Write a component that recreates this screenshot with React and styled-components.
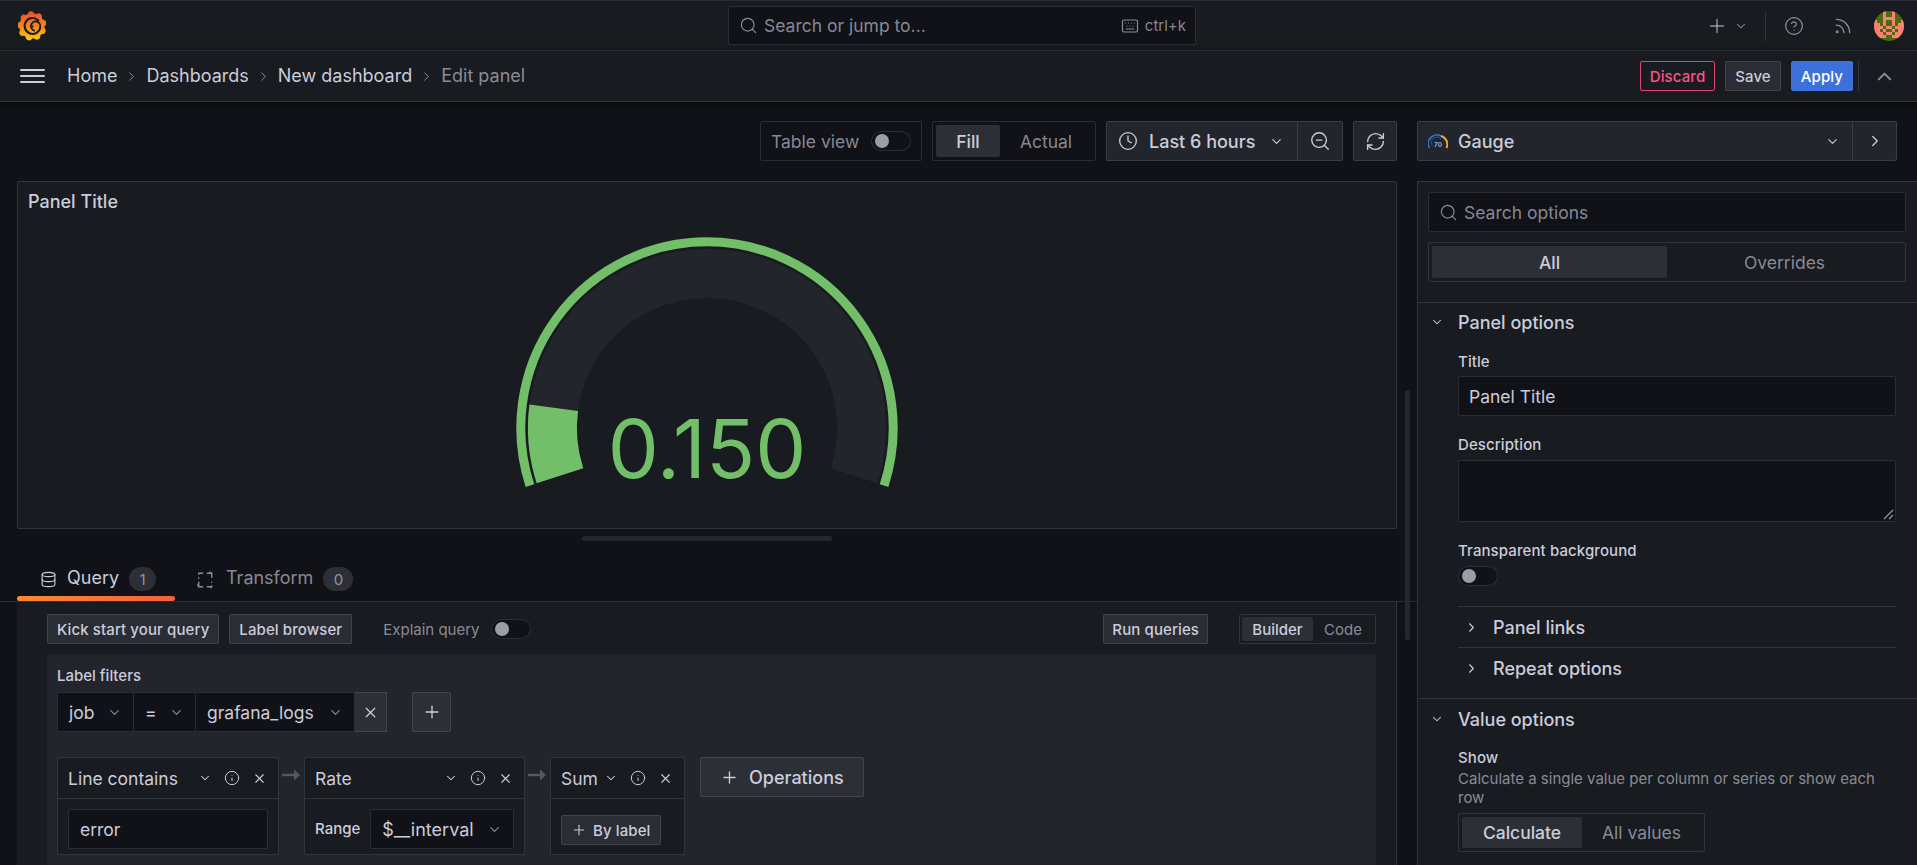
import React from "react";
import styled, { createGlobalStyle } from "styled-components";
import {
  Search, Plus, ChevronDown, ChevronRight, ChevronUp, CircleHelp, Rss, Clock, ZoomOut,
  RefreshCw, Database, Info, X, Keyboard,
} from "lucide-react";

const Global = createGlobalStyle`
  html, body { margin: 0; padding: 0; background: #111217; height: 100%; overflow: hidden; }
  body { font-family: Inter, "Noto Sans", sans-serif; font-size: 17.5px; color: #ccccdc; }
  * { box-sizing: border-box; }
`;

const border = "rgba(204,204,220,0.15)";
const muted = "rgba(204,204,220,0.65)";

const Page = styled.div`
  position: relative;
  width: 1917px;
  height: 865px;
  overflow: hidden;
  background: #111217;
`;

const TopBar = styled.header`
  display: grid;
  grid-template-columns: 728px 468px 1fr;
  align-items: center;
  height: 51px;
  background: #181b1f;
  border-top: 1px solid #2a2d38;
  border-bottom: 1px solid ${border};
`;
const LogoSlot = styled.div`
  padding-left: 18px;
  display: flex;
  align-items: center;
`;
const GlobalSearch = styled.div`
  display: flex;
  align-items: center;
  height: 39px;
  padding: 0 9px 0 10px;
  background: #111217;
  border: 1px solid ${border};
  border-radius: 2px;
  color: ${muted};
  svg { flex: none; }
`;
const SearchHint = styled.span`
  margin-left: 6px;
  flex: 1;
  font-size: 17.5px;
`;
const ShortcutText = styled.span`
  margin-left: 6px;
  font-size: 15px;
`;
const TopActions = styled.div`
  display: flex;
  align-items: center;
  justify-content: flex-end;
  padding-right: 13px;
  color: ${muted};
`;
const ActionDivider = styled.span`
  width: 1px;
  height: 30px;
  margin: 0 18px 0 17px;
  background: ${border};
`;
const ActionIcon = styled.span`
  display: inline-flex;
  margin-left: ${(p) => p.$ml || 0}px;
`;

const Breadcrumbar = styled.div`
  position: relative;
  z-index: 2;
  display: flex;
  align-items: center;
  height: 51px;
  padding: 0 13px 0 20px;
  background: #181b1f;
  border-bottom: 1px solid ${border};
  box-shadow: 0 2px 8px rgba(0, 0, 0, 0.65);
`;
const MenuLines = styled.span`
  display: flex;
  flex-direction: column;
  justify-content: space-between;
  width: 25px;
  height: 15px;
  margin-right: 22px;
  i { display: block; height: 2.4px; background: #ccccdc; border-radius: 1px; }
`;
const Crumb = styled.span`
  margin-top: -1px;
  font-size: 18px;
  color: ${(p) => (p.$current ? muted : "#ccccdc")};
`;
const CrumbSep = styled.span`
  display: inline-flex;
  justify-content: center;
  width: 29px;
  color: ${muted};
`;
const Spacer = styled.span`
  flex: 1;
`;
const EndGap = styled.span`
  flex: none;
  width: 8px;
`;
const SmallButton = styled.button`
  display: inline-flex;
  align-items: center;
  height: 30px;
  padding: 0 ${(p) => p.$px || 9}px;
  margin-left: ${(p) => p.$ml || 0}px;
  font: 500 15px Inter, sans-serif;
  letter-spacing: 0.1px;
  color: #ccccdc;
  background: #2a2d33;
  border: 1px solid ${border};
  border-radius: 2px;
  white-space: nowrap;
`;
const DangerButton = styled(SmallButton)`
  color: #ff5286;
  background: transparent;
  border-color: #e0446f;
`;
const PrimaryButton = styled(SmallButton)`
  color: #fff;
  background: #3d71d9;
  border-color: #3d71d9;
`;
const VDivider = styled.span`
  width: 1px;
  height: 30px;
  margin: 0 14px 0 5px;
  background: ${border};
`;

const Workspace = styled.div`
  display: flex;
  height: 763px;
`;
const LeftColumn = styled.div`
  width: 1417px;
  padding: 19px 20px 0 17px;
  flex: none;
`;
const RightColumn = styled.div`
  flex: 1;
  padding-top: 19px;
  min-width: 0;
`;
const Toolbar = styled.div`
  display: flex;
  justify-content: flex-end;
  height: 40px;
  gap: 10px;
`;
const BoxedToggle = styled.div`
  display: flex;
  align-items: center;
  width: 162px;
  padding: 0 11px 0 10px;
  gap: 12px;
  color: ${muted};
  white-space: nowrap;
  border: 1px solid ${border};
  border-radius: 2px;
`;
const Toggle = styled.span`
  display: flex;
  align-items: center;
  width: 40px;
  height: 20px;
  padding: 0 3px;
  background: #111217;
  border: 1px solid ${border};
  border-radius: 10px;
  flex: none;
  &::before {
    content: "";
    width: 14px;
    height: 14px;
    border-radius: 50%;
    background: #9d9da8;
  }
`;
const Segmented = styled.div`
  display: ${(p) => (p.$block ? "flex" : "inline-flex")};
  align-items: stretch;
  height: ${(p) => p.$h || 40}px;
  margin-left: ${(p) => p.$ml || 0}px;
  padding: ${(p) => p.$pad || 3}px;
  width: ${(p) => (p.$w ? `${p.$w}px` : "auto")};
  border: 1px solid ${border};
  border-radius: 2px;
`;
const Segment = styled.span`
  display: flex;
  align-items: center;
  justify-content: center;
  width: ${(p) => (p.$w ? `${p.$w}px` : "auto")};
  flex: ${(p) => (p.$grow ? 1 : "none")};
  font-size: ${(p) => p.$size || 17.5}px;
  font-weight: ${(p) => (p.$active ? 500 : 400)};
  color: ${(p) => (p.$active ? "#ccccdc" : muted)};
  background: ${(p) => (p.$active ? "#2c2f36" : "transparent")};
  border-radius: 2px;
`;
const TimeGroup = styled.div`
  display: flex;
  height: 40px;
  background: #22252b;
  border: 1px solid ${border};
  border-radius: 2px;
`;
const TimeRange = styled.div`
  display: flex;
  align-items: center;
  width: 191px;
  padding: 0 0 0 11px;
  font-size: 18px;
  font-weight: 500;
  white-space: nowrap;
  border-right: 1px solid ${border};
  span { margin: 0 14px 0 11px; }
`;
const IconCell = styled.div`
  display: flex;
  align-items: center;
  justify-content: center;
  width: ${(p) => p.$w || 44}px;
`;
const IconBox = styled.div`
  display: flex;
  align-items: center;
  justify-content: center;
  width: 44px;
  height: 40px;
  background: #22252b;
  border: 1px solid ${border};
  border-radius: 2px;
`;
const Panel = styled.section`
  height: 348px;
  margin-top: 20px;
  background: #181b1f;
  border: 1px solid ${border};
  border-radius: 2px;
`;
const PanelTitle = styled.div`
  height: 39px;
  line-height: 39px;
  padding-left: 10px;
  font-size: 18px;
  font-weight: 500;
`;
const GaugeSvg = styled.svg`
  display: block;
  margin: 5px auto 0;
`;
const Splitter = styled.div`
  display: flex;
  justify-content: center;
  height: 38px;
  padding-top: 7px;
  &::before {
    content: "";
    width: 250px;
    height: 5px;
    border-radius: 3px;
    background: #25272d;
  }
`;
const Tabs = styled.div`
  display: flex;
  height: 35px;
  margin: 0 -20px 0 -17px;
  padding-left: 17px;
  border-bottom: 1px solid ${border};
`;
const Tab = styled.div`
  position: relative;
  display: flex;
  align-items: flex-start;
  height: 34px;
  width: ${(p) => p.$w}px;
  padding-left: ${(p) => p.$pl}px;
  color: ${(p) => (p.$active ? "#ccccdc" : muted)};
  font-size: 18px;
  svg { margin-top: 4px; flex: none; }
  &::after {
    content: "";
    display: ${(p) => (p.$active ? "block" : "none")};
    position: absolute;
    left: 0;
    right: 0;
    bottom: 0;
    height: 5px;
    border-radius: 3px;
    background: linear-gradient(90deg, #ff8833, #f55f3e);
  }
`;
const TabLabel = styled.span`
  margin: 0 10px 0 ${(p) => p.$ml || 10}px;
`;
const Badge = styled.span`
  display: inline-flex;
  align-items: center;
  justify-content: center;
  width: ${(p) => p.$w || 27}px;
  height: 24px;
  font-size: 15px;
  color: ${muted};
  background: #2c2f36;
  border-radius: 12px;
`;
const QueryEditor = styled.div`
  height: 264px;
  padding: 12px 20px 0 30px;
  background: #181b1f;
  border-right: 1px solid ${border};
`;
const QueryHeader = styled.div`
  display: flex;
  align-items: center;
  height: 30px;
`;
const ExplainLabel = styled.span`
  margin: 0 11px 0 31px;
  font-size: 15px;
  color: ${muted};
`;
const QueryBody = styled.div`
  height: 215px;
  margin-top: 10px;
  padding: 12px 10px;
  background: #22252b;
  border-radius: 2px;
`;
const FieldLabel = styled.div`
  font-size: 15px;
  font-weight: 500;
  line-height: 20px;
  height: 26px;
`;
const FilterRow = styled.div`
  display: flex;
  height: 40px;
`;
const FilterSelect = styled.div`
  display: flex;
  align-items: center;
  justify-content: space-between;
  width: ${(p) => p.$w}px;
  padding: 0 11px;
  background: #111217;
  border: 1px solid ${border};
  border-left-width: ${(p) => (p.$first ? 1 : 0)}px;
  svg { color: ${muted}; }
`;
const FilterRemove = styled.div`
  display: flex;
  align-items: center;
  justify-content: center;
  width: 32px;
  background: #2c2f36;
  border: 1px solid ${border};
  border-left: 0;
`;
const AddFilter = styled.div`
  display: flex;
  align-items: center;
  justify-content: center;
  width: 39px;
  margin-left: 25px;
  background: #2c2f36;
  border: 1px solid ${border};
  border-radius: 2px;
`;
const OperationsRow = styled.div`
  display: flex;
  align-items: flex-start;
  margin-top: 25px;
`;
const OpCard = styled.div`
  width: ${(p) => p.$w}px;
  height: 98px;
  background: #181b1f;
  border: 1px solid ${border};
  border-radius: 2px;
`;
const OpHeader = styled.div`
  display: grid;
  grid-template-columns: 1fr 24px 30px 24px;
  align-items: center;
  justify-items: center;
  height: 41px;
  padding: 0 7px 0 10px;
  border-bottom: 1px solid ${border};
  svg { color: #ccccdc; }
`;
const OpName = styled.span`
  justify-self: start;
  font-size: 17.5px;
`;
const OpBody = styled.div`
  display: flex;
  align-items: flex-start;
  height: 55px;
  padding: 10px 10px 0;
`;
const OpInput = styled.div`
  display: flex;
  align-items: center;
  flex: 1;
  height: 40px;
  padding: 0 11px;
  background: #111217;
  border: 1px solid ${border};
  border-radius: 2px;
`;
const OpSelect = styled(OpInput)`
  justify-content: space-between;
  margin-left: 10px;
  font-size: 18px;
  svg { color: ${muted}; }
`;
const OpLabel = styled.span`
  line-height: 40px;
  font-size: 15px;
  font-weight: 500;
`;
const OpArrow = styled.svg`
  flex: none;
  width: 25px;
  margin-top: 11px;
`;
const ByLabel = styled(SmallButton)`
  margin-top: 6px;
  padding: 0 10px 0 9px;
  gap: 6px;
`;
const OperationsButton = styled.div`
  display: flex;
  align-items: center;
  gap: 10px;
  width: 164px;
  height: 40px;
  margin-left: 15px;
  padding-left: 19px;
  font-size: 18px;
  font-weight: 500;
  background: #2c2f36;
  border: 1px solid ${border};
  border-radius: 2px;
`;

const VizPicker = styled.div`
  display: flex;
  height: 40px;
  width: 480px;
  background: #22252b;
  border: 1px solid ${border};
  border-radius: 2px;
`;
const VizName = styled.div`
  display: flex;
  align-items: center;
  flex: 1;
  gap: 10px;
  padding: 0 12px 0 10px;
  font-size: 18px;
  font-weight: 500;
  border-right: 1px solid ${border};
  span { flex: 1; }
`;
const OptionsPane = styled.aside`
  height: 720px;
  margin-top: 20px;
  background: #181b1f;
  border: 1px solid ${border};
  border-right: 0;
  border-bottom: 0;
`;
const OptionsTop = styled.div`
  padding: 10px 11px 0 10px;
  height: 121px;
  border-bottom: 1px solid ${border};
`;
const OptionsSearch = styled.div`
  display: flex;
  align-items: center;
  gap: 6px;
  height: 40px;
  padding: 0 10px;
  color: ${muted};
  background: #111217;
  border: 1px solid ${border};
  border-radius: 2px;
`;
const OverridesTabs = styled(Segmented)`
  margin-top: 10px;
`;
const SectionHeader = styled.div`
  display: flex;
  align-items: center;
  height: ${(p) => p.$h || 40}px;
  font-size: 18px;
  font-weight: 500;
  svg { margin: 0 14px 0 12px; color: #ccccdc; flex: none; }
`;
const SectionBody = styled.div`
  padding: 0 21px 0 40px;
`;
const PropLabel = styled.div`
  font-size: 15px;
  font-weight: 500;
  letter-spacing: 0.1px;
  line-height: 20px;
  margin-bottom: ${(p) => p.$mb ?? 5}px;
`;
const TextField = styled.div`
  display: flex;
  align-items: center;
  height: 40px;
  padding: 0 10px;
  background: #111217;
  border: 1px solid ${border};
  border-radius: 2px;
`;
const TextAreaField = styled.div`
  position: relative;
  height: 62px;
  background: #111217;
  border: 1px solid ${border};
  border-radius: 2px;
`;
const ResizeGrip = styled.svg`
  position: absolute;
  right: 1px;
  bottom: 1px;
`;
const PropGap = styled.div`
  height: ${(p) => p.$h}px;
`;
const SubSection = styled.div`
  display: flex;
  align-items: center;
  height: 41px;
  border-top: 1px solid ${border};
  font-size: 18px;
  font-weight: 500;
  svg { margin: 0 14px 0 6px; color: #ccccdc; flex: none; }
`;
const SectionRule = styled.div`
  height: 1px;
  margin-top: 10px;
  background: ${border};
`;
const HelpText = styled.div`
  font-size: 15px;
  line-height: 19px;
  margin: -4px 0 6px;
  color: ${muted};
`;
const PaneScroll = styled.div`
  position: absolute;
  left: 1405px;
  top: 390px;
  width: 5px;
  height: 250px;
  border-radius: 3px;
  background: #25272d;
`;

const pt = (r, deg) => {
  const a = (deg * Math.PI) / 180;
  return [200 + r * Math.cos(a), 202 - r * Math.sin(a)];
};
const arc = (r, from, to) => {
  const [x1, y1] = pt(r, from);
  const [x2, y2] = pt(r, to);
  return `M${x1} ${y1}A${r} ${r} 0 ${from - to > 180 ? 1 : 0} 1 ${x2} ${y2}`;
};

const Gauge = () => (
  <GaugeSvg width="400" height="290" viewBox="0 0 400 290">
    <path d={arc(186.2, 198, -18)} fill="none" stroke="#73bf69" strokeWidth="9" />
    <path d={arc(154.6, 198, -18)} fill="none" stroke="#22252b" strokeWidth="49" />
    <path d={arc(154.6, 198, 172.5)} fill="none" stroke="#73bf69" strokeWidth="49" />
    <text x="200" y="252" textAnchor="middle" fontFamily="Inter, sans-serif" fontSize="81" fontWeight="400" fill="#73bf69">0.150</text>
  </GaugeSvg>
);

const gearPath = (() => {
  const n = 9;
  const cx = 14, cy = 15.5;
  let d = "";
  for (let i = 0; i < n; i++) {
    const base = -95 + (i * 360) / n;
    const pts = [[12, -20], [14.6, -5], [14.6, 5], [12, 20]];
    pts.forEach(([r, o], j) => {
      const a = ((base + o) * Math.PI) / 180;
      d += `${i === 0 && j === 0 ? "M" : "L"}${(cx + r * Math.cos(a)).toFixed(2)} ${(cy + r * Math.sin(a)).toFixed(2)}`;
    });
  }
  return d + "Z";
})();

const Logo = () => (
  <svg width="28" height="30" viewBox="0 0 28 31">
    <defs>
      <linearGradient id="lg" x1="0" y1="0" x2="0" y2="1">
        <stop offset="0" stopColor="#ef4e2a" />
        <stop offset="0.55" stopColor="#f68a1e" />
        <stop offset="1" stopColor="#fbca0a" />
      </linearGradient>
    </defs>
    <path d={gearPath} fill="url(#lg)" stroke="url(#lg)" strokeWidth="1.2" strokeLinejoin="round" />
    <path d="M20.5 9.8A8.2 8.2 0 1 0 22.6 17.2" fill="none" stroke="#181b1f" strokeWidth="2.1" strokeLinecap="round" />
    <path d="M22.4 16.8A4.8 4.8 0 1 0 16.4 20.2" fill="none" stroke="#181b1f" strokeWidth="1.8" strokeLinecap="round" />
    <circle cx="14.2" cy="16" r="1.3" fill="#181b1f" />
  </svg>
);

const avatarRows = [
  ".s.s..s.s.",
  "...s..s...",
  "...ssss...",
  "s..s..s..s",
  "ss.s..s.ss",
  "sss.ss.sss",
  "ss.s..s.ss",
  "sss.ss.sss",
  ".sss..sss.",
  "..........",
];
const Avatar = () => (
  <svg width="30" height="30" viewBox="0 0 30 30">
    <defs>
      <clipPath id="avatar-clip"><circle cx="15" cy="15" r="15" /></clipPath>
    </defs>
    <g clipPath="url(#avatar-clip)">
      <rect width="30" height="30" fill="#4a6b10" />
      {avatarRows.flatMap((row, y) =>
        row.split("").map((c, x) =>
          c === "s" ? <rect key={`${x}-${y}`} x={x * 3} y={y * 3} width="3" height="3" fill="#fa8072" /> : null
        )
      )}
    </g>
  </svg>
);

const MiniGaugeSvg = styled.svg`
  flex: none;
`;
const GaugeMini = () => (
  <MiniGaugeSvg width="20" height="15" viewBox="0 0 20 15">
    <path d="M1.5 14A8.6 8.6 0 0 1 13 2" fill="none" stroke="#3871dc" strokeWidth="1.6" />
    <path d="M13 2A8.6 8.6 0 0 1 18.5 14" fill="none" stroke="#f2a62b" strokeWidth="2" />
    <path d="M4.5 12A5.5 5.5 0 0 1 13 5" fill="none" stroke="#3871dc" strokeWidth="1" opacity=".6" />
    <text x="10" y="13" textAnchor="middle" fontFamily="Inter, sans-serif" fontSize="6.5" fontWeight="700" fill="#8ea8d8">70</text>
  </MiniGaugeSvg>
);

const TransformIcon = () => (
  <svg width="18" height="18" viewBox="0 0 20 20" fill="none" stroke="currentColor" strokeWidth="1.6">
    <path d="M8 2.5H3v1.5M3 7v1.5" />
    <path d="M12 2.5h5.5v5M15 1l2.5 1.5" />
    <path d="M3 12v5.5h5M1.5 15L3 17.5" />
    <path d="M17.5 12v1M17.5 16v1.5H12M16 19l1.5-1.5" />
  </svg>
);

const Arrow = () => (
  <OpArrow height="14" viewBox="0 0 25 14">
    <path d="M3 7h14" stroke="#55585f" strokeWidth="2.4" />
    <path d="M15 1.5L21 7l-6 5.5z" fill="#55585f" />
  </OpArrow>
);

const Chev = ({ size = 15 }) => <ChevronDown size={size} strokeWidth={1.8} />;

export default function App() {
  return (
    <Page>
      <Global />
      <TopBar>
        <LogoSlot><Logo /></LogoSlot>
        <GlobalSearch>
          <Search size={19} strokeWidth={1.5} />
          <SearchHint>Search or jump to...</SearchHint>
          <Keyboard size={18} strokeWidth={1.6} />
          <ShortcutText>ctrl+k</ShortcutText>
        </GlobalSearch>
        <TopActions>
          <Plus size={22} strokeWidth={1.6} />
          <ActionIcon $ml={6}><Chev size={14} /></ActionIcon>
          <ActionDivider />
          <CircleHelp size={20} strokeWidth={1.5} />
          <ActionIcon $ml={29}><Rss size={20} strokeWidth={1.6} /></ActionIcon>
          <ActionIcon $ml={21}><Avatar /></ActionIcon>
        </TopActions>
      </TopBar>

      <Breadcrumbar>
        <MenuLines><i /><i /><i /></MenuLines>
        <Crumb>Home</Crumb>
        <CrumbSep><ChevronRight size={15} strokeWidth={1.5} /></CrumbSep>
        <Crumb>Dashboards</Crumb>
        <CrumbSep><ChevronRight size={15} strokeWidth={1.5} /></CrumbSep>
        <Crumb>New dashboard</Crumb>
        <CrumbSep><ChevronRight size={15} strokeWidth={1.5} /></CrumbSep>
        <Crumb $current>Edit panel</Crumb>
        <Spacer />
        <DangerButton>Discard</DangerButton>
        <SmallButton $ml={10}>Save</SmallButton>
        <PrimaryButton $ml={10}>Apply</PrimaryButton>
        <VDivider />
        <ChevronUp size={23} strokeWidth={2} color={muted} />
        <EndGap />
      </Breadcrumbar>

      <Workspace>
        <LeftColumn>
          <Toolbar>
            <BoxedToggle>Table view<Toggle /></BoxedToggle>
            <Segmented>
              <Segment $active $w={64}>Fill</Segment>
              <Segment $w={92}>Actual</Segment>
            </Segmented>
            <TimeGroup>
              <TimeRange>
                <Clock size={20} strokeWidth={1.6} />
                <span>Last 6 hours</span>
                <Chev />
              </TimeRange>
              <IconCell><ZoomOut size={22} strokeWidth={1.5} /></IconCell>
            </TimeGroup>
            <IconBox><RefreshCw size={21} strokeWidth={1.6} /></IconBox>
          </Toolbar>

          <Panel>
            <PanelTitle>Panel Title</PanelTitle>
            <Gauge />
          </Panel>
          <Splitter />

          <Tabs>
            <Tab $active $w={158} $pl={23}>
              <Database size={17} strokeWidth={1.6} />
              <TabLabel>Query</TabLabel>
              <Badge>1</Badge>
            </Tab>
            <Tab $w={200} $pl={21}>
              <TransformIcon />
              <TabLabel $ml={12}>Transform</TabLabel>
              <Badge $w={30}>0</Badge>
            </Tab>
          </Tabs>

          <QueryEditor>
            <QueryHeader>
              <SmallButton>Kick start your query</SmallButton>
              <SmallButton $ml={10}>Label browser</SmallButton>
              <ExplainLabel>Explain query</ExplainLabel>
              <Toggle />
              <Spacer />
              <SmallButton $px={8}>Run queries</SmallButton>
              <Segmented $h={30} $pad={2} $ml={31}>
                <Segment $active $size={15} $w={71}>Builder</Segment>
                <Segment $size={15} $w={60}>Code</Segment>
              </Segmented>
            </QueryHeader>

            <QueryBody>
              <FieldLabel>Label filters</FieldLabel>
              <FilterRow>
                <FilterSelect $first $w={77}>job<Chev /></FilterSelect>
                <FilterSelect $w={62}>=<Chev /></FilterSelect>
                <FilterSelect $w={159}>grafana_logs<Chev /></FilterSelect>
                <FilterRemove><X size={17} strokeWidth={1.7} /></FilterRemove>
                <AddFilter><Plus size={20} strokeWidth={1.6} /></AddFilter>
              </FilterRow>

              <OperationsRow>
                <OpCard $w={222}>
                  <OpHeader>
                    <OpName>Line contains</OpName>
                    <Chev size={14} />
                    <Info size={16} strokeWidth={1.5} />
                    <X size={15} strokeWidth={1.7} />
                  </OpHeader>
                  <OpBody><OpInput>error</OpInput></OpBody>
                </OpCard>
                <Arrow />
                <OpCard $w={221}>
                  <OpHeader>
                    <OpName>Rate</OpName>
                    <Chev size={14} />
                    <Info size={16} strokeWidth={1.5} />
                    <X size={15} strokeWidth={1.7} />
                  </OpHeader>
                  <OpBody>
                    <OpLabel>Range</OpLabel>
                    <OpSelect>$__interval<Chev /></OpSelect>
                  </OpBody>
                </OpCard>
                <Arrow />
                <OpCard $w={135}>
                  <OpHeader>
                    <OpName>Sum</OpName>
                    <Chev size={14} />
                    <Info size={16} strokeWidth={1.5} />
                    <X size={15} strokeWidth={1.7} />
                  </OpHeader>
                  <OpBody>
                    <ByLabel><Plus size={16} strokeWidth={1.6} />By label</ByLabel>
                  </OpBody>
                </OpCard>
                <OperationsButton><Plus size={19} strokeWidth={1.7} />Operations</OperationsButton>
              </OperationsRow>
            </QueryBody>
          </QueryEditor>
        </LeftColumn>

        <RightColumn>
          <VizPicker>
            <VizName>
              <GaugeMini />
              <span>Gauge</span>
              <Chev />
            </VizName>
            <IconCell $w={43}><ChevronRight size={18} strokeWidth={1.7} /></IconCell>
          </VizPicker>

          <OptionsPane>
            <OptionsTop>
              <OptionsSearch>
                <Search size={19} strokeWidth={1.5} />
                Search options
              </OptionsSearch>
              <OverridesTabs $block>
                <Segment $active $w={235}>All</Segment>
                <Segment $grow>Overrides</Segment>
              </OverridesTabs>
            </OptionsTop>

            <SectionHeader $h={38}><Chev size={14} />Panel options</SectionHeader>
            <SectionBody>
              <PropGap $h={11} />
              <PropLabel $mb={4}>Title</PropLabel>
              <TextField>Panel Title</TextField>
              <PropGap $h={19} />
              <PropLabel>Description</PropLabel>
              <TextAreaField>
                <ResizeGrip width="11" height="11" viewBox="0 0 11 11">
                  <path d="M1 10L10 1M6 10l4-4" stroke="#9d9da8" strokeWidth="1.1" />
                </ResizeGrip>
              </TextAreaField>
              <PropGap $h={19} />
              <PropLabel>Transparent background</PropLabel>
              <Toggle />
              <PropGap $h={20} />
              <SubSection><ChevronRight size={15} strokeWidth={1.8} />Panel links</SubSection>
              <SubSection><ChevronRight size={15} strokeWidth={1.8} />Repeat options</SubSection>
            </SectionBody>
            <SectionRule />
            <SectionHeader><Chev size={14} />Value options</SectionHeader>
            <SectionBody>
              <PropGap $h={9} />
              <PropLabel>Show</PropLabel>
              <HelpText>Calculate a single value per column or series or show each row</HelpText>
              <Segmented $h={39} $w={247}>
                <Segment $active $w={120}>Calculate</Segment>
                <Segment $grow>All values</Segment>
              </Segmented>
            </SectionBody>
          </OptionsPane>
        </RightColumn>
      </Workspace>
      <PaneScroll />
    </Page>
  );
}
